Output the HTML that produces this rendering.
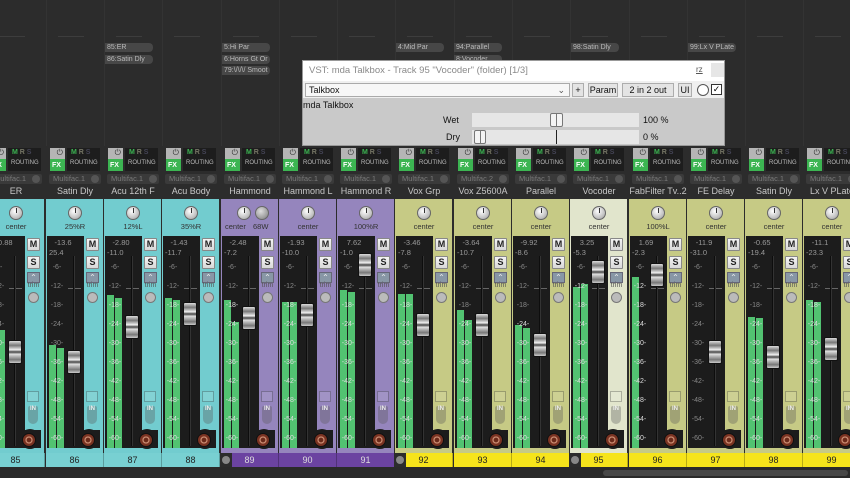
<!DOCTYPE html>
<html><head><meta charset="utf-8"><style>
*{margin:0;padding:0;box-sizing:border-box}
body{width:850px;height:478px;overflow:hidden;background:#2c2c2c;font-family:"Liberation Sans","DejaVu Sans",sans-serif;position:relative}
.a{position:absolute}
.t{position:absolute;white-space:nowrap}
.send{position:absolute;height:9px;background:#474747;color:#bbb;font-size:7px;line-height:9px;padding-left:2px;width:48px;overflow:hidden;border-radius:0 4px 4px 0}
.btn{position:absolute;background:linear-gradient(#f4f4f4,#d8d8d8);border:1px solid #888;color:#222;font-weight:bold;font-size:9px;text-align:center;line-height:11px;border-radius:1px}
.vw{font-size:9px;color:#111}
.wb{position:absolute;background:#e4e4e4;border:1px solid #adadad;font-size:9px;line-height:13px;text-align:center;color:#111}
</style></head><body>
<div id="m"></div>
<script>
var S=[
["ER","t","center",-0.88,"-3",330,330,340,"85"],
["Satin Dly","t","25%R",-13.6,"25.4",345,348,350,"86"],
["Acu 12th F","t","12%L",-2.80,"-11.0",295,298,315,"87"],
["Acu Body","t","35%R",-1.43,"-11.7",298,300,302,"88"],
["Hammond","p","center",-2.48,"-7.2",300,322,306,"89"],
["Hammond L","p","center",-1.93,"-10.0",302,302,303,"90"],
["Hammond R","p","100%R",7.62,"-1.0",290,292,253,"91"],
["Vox Grp","o","center",-3.46,"-7.8",294,294,313,"92"],
["Vox Z5600A","o","center",-3.64,"-10.7",310,320,313,"93"],
["Parallel","o","center",-9.92,"-8.6",325,328,333,"94"],
["Vocoder","v","center",3.25,"-5.3",287,284,260,"95"],
["FabFilter Tv..2","o","100%L",1.69,"-2.3",277,500,263,"96"],
["FE Delay","o","center",-11.9,"-31.0",500,500,340,"97"],
["Satin Dly","o","center",-0.65,"-19.4",317,318,345,"98"],
["Lx V PLate","o","center",-11.1,"-23.3",300,302,337,"99"]];
var C={t:"#72cccf",p:"#9585bd",o:"#c6ca85",v:"#e1e5cc"};
var N={t:["#78d0d2","#222"],p:["#6b43a1","#ddd"],o:["#f6e41b","#222"],v:["#f6e41b","#222"]};
var W=58.3,x0=-12.7,h="";
// grid lines top
for(var i=0;i<16;i++){var x=Math.round(x0+i*W);h+='<div class="a" style="left:'+x+'px;top:0;width:1px;height:146px;background:#333"></div><div class="a" style="left:'+(x+12)+'px;top:36px;width:26px;height:1px;background:#3d3d3d"></div>';}
for(i=0;i<S.length;i++){
var s=S[i],x=Math.round(x0+i*W),c=C[s[1]];
var o='<div class="a" style="left:'+x+'px;top:146px;width:58px;height:307px">';
// top buttons
o+='<div class="a" style="left:4px;top:2px;width:15px;height:11px;background:#b5b5b5;color:#333;font-size:8px;text-align:right;line-height:10px;padding-right:2px">⏻</div>';
o+='<div class="a" style="left:4px;top:13px;width:15px;height:12px;background:#3cb552;color:#fff;font-size:7px;font-weight:bold;line-height:13px;padding-left:2px">FX</div>';
o+='<div class="a" style="left:21px;top:2px;width:33px;height:23px;background:#1d1d1d"><div class="t" style="left:4px;top:1px;font-size:7px;color:#3cb552;font-weight:bold">M <span style="color:#776">R</span> <span style="color:#445">S</span></div><div class="t" style="left:3px;top:12px;font-size:6px;color:#bbb">ROUTING</div></div>';
o+='<div class="a" style="left:3px;top:28px;width:52px;height:10px;background:#3a3a3a;border-radius:2px;color:#7a7a7a;font-size:7.5px;line-height:10px;padding-left:4px">Multifac.'+(i==8?2:1)+'<span style="position:absolute;right:2px;top:1px;width:8px;height:8px;border-radius:50%;background:#555"></span></div>';
o+='<div class="t" style="left:0;width:58px;top:40px;text-align:center;font-size:9px;color:#c8c8c8">'+s[0]+'</div>';
// colored
o+='<div class="a" style="left:0;top:53px;width:57px;height:254px;background:'+c+'"></div>';
var kx=(s[0]=="Hammond")?16:22;
o+='<div class="a" style="left:'+kx+'px;top:60px;width:14px;height:14px;border-radius:50%;background:radial-gradient(circle at 40% 35%,#fff,#bbb 70%,#888);border:1px solid #666"><div class="a" style="left:6px;top:1px;width:1px;height:5px;background:#333"></div></div>';
if(s[0]=="Hammond"){o+='<div class="a" style="left:34px;top:60px;width:14px;height:14px;border-radius:50%;background:radial-gradient(circle at 40% 35%,#ddd,#999 70%,#777);border:1px solid #666"></div><div class="t" style="left:32px;top:76px;font-size:7.5px;color:#333">68W</div><div class="t" style="left:4px;top:76px;font-size:7.5px;color:#333">center</div>';}
else o+='<div class="t" style="left:0;width:58px;top:76px;text-align:center;font-size:7.5px;color:#333">'+s[2]+'</div>';
// meter box
o+='<div class="a" style="left:1px;top:90px;width:37px;height:212px;background:#1c1c1c"></div>';
o+='<div class="a" style="left:30px;top:284px;width:24px;height:18px;background:#1c1c1c;border-radius:0 0 0 0"></div>';
o+='<div class="a" style="left:33px;top:283px;width:20px;height:20px;border-radius:50%;background:#1c1c1c"></div>';
// meters
var L=s[5]-146,R=s[6]-146;
if(L<302)o+='<div class="a" style="left:3px;top:'+L+'px;width:7px;height:'+(302-L)+'px;background:#52c271"></div>';
if(R<302)o+='<div class="a" style="left:11px;top:'+R+'px;width:7px;height:'+(302-R)+'px;background:#52c271"></div>';
var lv=[-6,-12,-18,-24,-30,-36,-42,-48,-54,-60];
for(var k=0;k<10;k++){var yy=269+19*k-146-5;o+='<div class="t" style="left:3px;width:16px;top:'+yy+'px;text-align:center;font-size:7px;color:'+(yy+5>Math.min(L,R)?'#ddd':'#888')+'">'+lv[k]+'-</div>';}
o+='<div class="t" style="left:2px;width:30px;top:92px;text-align:center;font-size:7.5px;color:#999">'+s[3].toFixed(Math.abs(s[3])>=10?1:2)+'</div>';
o+='<div class="t" style="left:3px;top:102px;font-size:7.5px;color:#999">'+s[4]+'</div>';
o+='<div class="a" style="left:22px;top:142px;width:13px;height:1px;background:#666"></div>';
o+='<div class="a" style="left:27px;top:110px;width:2px;height:190px;background:#0d0d0d;border-right:1px solid #333"></div>';
var fy=s[7]-146;
o+='<div class="a" style="left:21px;top:'+fy+'px;width:14px;height:24px;border-radius:2px;background:linear-gradient(#ddd,#777 20%,#eee 40%,#444 50%,#ddd 60%,#777 85%,#ccc);border:1px solid #111"></div>';
// right column
o+='<div class="btn" style="left:40px;top:92px;width:13px;height:13px">M</div>';
o+='<div class="btn" style="left:40px;top:110px;width:13px;height:13px">S</div>';
o+='<div class="a" style="left:40px;top:126px;width:13px;height:11px;background:#8897a6;border:1px solid #667;color:#eee;font-size:8px;text-align:center;line-height:9px">⌃</div>';
o+='<div class="t" style="left:38px;width:17px;top:136px;text-align:center;font-size:7px;color:#555">trim</div>';
o+='<div class="a" style="left:41px;top:146px;width:11px;height:11px;border-radius:50%;background:#bbb;border:1px solid #777"></div>';
o+='<div class="a" style="left:40px;top:245px;width:12px;height:11px;border:1px solid rgba(0,0,0,.25);background:rgba(255,255,255,.12)"></div>';
o+='<div class="a" style="left:41px;top:260px;width:10px;height:18px;border-radius:2px 2px 5px 5px;background:rgba(90,90,90,.35);color:#eee;font-size:6px;text-align:center;font-weight:bold">IN</div>';
o+='<div class="a" style="left:35px;top:287px;width:14px;height:14px;border-radius:50%;background:radial-gradient(circle,#6b2a1a 25%,#c98a70 30%,#c98a70 40%,#7a3322 45%);border:1px solid #111"></div>';
o+='</div>';
// number bar
var nb=N[s[1]];
o+='<div class="a" style="left:'+x+'px;top:453px;width:58px;height:14px;background:'+nb[0]+';border-right:1px solid rgba(0,0,0,.25);color:'+nb[1]+';font-size:9px;line-height:14px;text-align:center">'+s[8]+'</div>';
h+=o;}
h+='<div class="a" style="left:220px;top:453px;width:12px;height:14px;background:#2c2c2c"><div class="a" style="left:2px;top:3px;width:8px;height:8px;border-radius:50%;background:#888"></div></div>';
h+='<div class="a" style="left:394px;top:453px;width:12px;height:14px;background:#2c2c2c"><div class="a" style="left:2px;top:3px;width:8px;height:8px;border-radius:50%;background:#888"></div></div>';
h+='<div class="a" style="left:569px;top:453px;width:12px;height:14px;background:#2c2c2c"><div class="a" style="left:2px;top:3px;width:8px;height:8px;border-radius:50%;background:#888"></div></div>';
h+='<div class="a" style="left:0;top:467px;width:850px;height:11px;background:#2a2a2a"></div><div class="a" style="left:603px;top:470px;width:245px;height:6px;border-radius:3px;background:#474747"></div>';
// sends
var sd=[[105,43,"85:ER"],[105,55,"86:Satin Dly"],[222,43,"5:Hi Par"],[222,55,"6:Horns Gt Or"],[222,66,"79:\\/\\/\\/ Smoot"],[396,43,"4:Mid Par"],[454,43,"94:Parallel"],[454,55,"8:Vocoder"],[571,43,"98:Satin Dly"],[688,43,"99:Lx V PLate"]];
for(i=0;i<sd.length;i++)h+='<div class="send" style="left:'+sd[i][0]+'px;top:'+sd[i][1]+'px">'+sd[i][2]+'</div>';
document.getElementById("m").innerHTML=h;
</script>
<!-- VST window -->
<div class="a" style="left:302px;top:60px;width:423px;height:86px;background:#c9c9c9;border:1px solid #999">
<div class="a" style="left:0;top:0;width:421px;height:20px;background:#fff"><div class="t" style="left:6px;top:4px;font-size:9.5px;color:#8a8a8a">VST: mda Talkbox - Track 95 "Vocoder" (folder) [1/3]</div><div class="t" style="left:393px;top:4px;font-size:8px;color:#555;text-decoration:underline">rz</div><div class="a" style="left:408px;top:2px;width:13px;height:14px;background:#e6e6e6"></div></div>
<div class="a" style="left:0;top:20px;width:421px;height:17px;background:#f0f0f0"></div>
<div class="a" style="left:2px;top:22px;width:265px;height:14px;background:#f7f7f7;border:1px solid #aaa;font-size:9px;line-height:12px;padding-left:3px;color:#111">Talkbox<span style="position:absolute;right:4px;top:0;color:#555">⌄</span></div>
<div class="wb" style="left:269px;top:22px;width:12px;height:14px">+</div>
<div class="wb" style="left:285px;top:22px;width:30px;height:14px">Param</div>
<div class="wb" style="left:319px;top:22px;width:52px;height:14px">2 in 2 out</div>
<div class="wb" style="left:375px;top:22px;width:14px;height:14px">UI</div>
<div class="a" style="left:394px;top:23px;width:12px;height:12px;border-radius:50%;border:1px solid #555;background:#fff"></div>
<div class="a" style="left:408px;top:23px;width:11px;height:11px;border:1px solid #333;background:#fff;font-size:9px;line-height:9px;text-align:center">✓</div>
<div class="t vw" style="left:0;top:39px">mda Talkbox</div>
<div class="t vw" style="left:140px;top:54px">Wet</div>
<div class="a" style="left:169px;top:52px;width:167px;height:14px;background:#e6e6e6"></div>
<div class="a" style="left:247px;top:52px;width:13px;height:14px;background:#f4f4f4;border:1px solid #777;border-radius:2px"><div class="a" style="left:5px;top:0;width:1px;height:12px;background:#777"></div></div>
<div class="t vw" style="left:340px;top:54px">100 %</div>
<div class="t vw" style="left:143px;top:71px">Dry</div>
<div class="a" style="left:169px;top:69px;width:167px;height:14px;background:#e6e6e6"></div>
<div class="a" style="left:253px;top:69px;width:1px;height:14px;background:#222"></div>
<div class="a" style="left:171px;top:69px;width:12px;height:14px;background:#f4f4f4;border:1px solid #777;border-radius:2px"><div class="a" style="left:5px;top:0;width:1px;height:12px;background:#777"></div></div>
<div class="t vw" style="left:340px;top:71px">0 %</div>
</div>
</body></html>
